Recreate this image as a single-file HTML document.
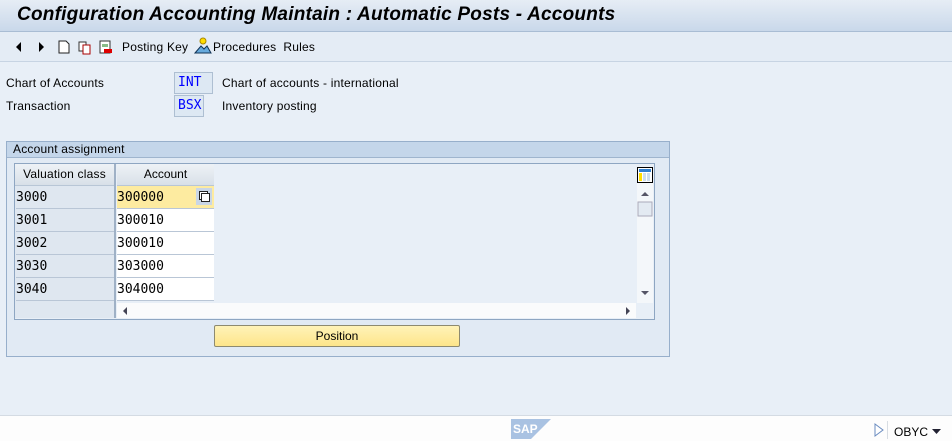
<!DOCTYPE html>
<html><head><style>
body{margin:0;width:952px;height:440px;background:#e8eff7;font-family:"Liberation Sans",sans-serif;font-size:12px;color:#000;position:relative;overflow:hidden}
.a{position:absolute}
.mono{font-family:"DejaVu Sans Mono","Liberation Mono",monospace;font-size:13px}
</style></head><body>
<div class="a" style="left:0;top:0;width:952px;height:31px;background:linear-gradient(#e6edf5,#c9d8ea);border-bottom:1px solid #a9bdd4"></div>
<div class="a" style="left:17px;top:4px;font-size:19px;font-weight:bold;font-style:italic;color:#000;letter-spacing:0.22px">Configuration Accounting Maintain : Automatic Posts - Accounts</div>
<div class="a" style="left:0;top:32px;width:952px;height:29px;background:#e4ecf5;border-bottom:1px solid #c7d4e3"></div>
<svg class="a" style="left:12px;top:39px" width="110" height="16">
<path d="M4 8 L9 3 V13Z" fill="#000"/><path d="M27 3 L32 8 L27 13Z" fill="#000"/>
<path d="M47 2 H54 L57 5 V14 H47Z" fill="#fff" stroke="#222"/>
<rect x="67" y="3" width="7" height="9" fill="#fff" stroke="#333"/><rect x="71" y="6" width="7" height="9" fill="#fff" stroke="#a00"/>
<rect x="88" y="2" width="10" height="12" fill="#fff" stroke="#333"/><rect x="90" y="5" width="6" height="3" fill="#8b8"/><rect x="92" y="10" width="8" height="4" fill="#d00"/>
</svg>
<div class="a" style="left:122px;top:40px;font-size:12px;letter-spacing:0.2px">Posting Key</div>
<svg class="a" style="left:194px;top:37px" width="18" height="18"><circle cx="9" cy="4" r="3" fill="#fd0" stroke="#a80"/><path d="M1 16 L7 9 L10 12 L13 9 L17 16Z" fill="#6ad" stroke="#135"/></svg>
<div class="a" style="left:213px;top:40px;letter-spacing:0.2px">Procedures&nbsp; Rules</div>

<div class="a" style="left:6px;top:76px;letter-spacing:0.2px">Chart of Accounts</div>
<div class="a" style="left:6px;top:99px;letter-spacing:0.2px">Transaction</div>
<div class="a mono" style="left:174px;top:72px;background:#dde8f3;border:1px solid #aebfd2;color:#00f;line-height:20px;padding-left:3px;box-sizing:border-box;width:39px;height:22px">INT</div>
<div class="a mono" style="left:174px;top:95px;background:#dde8f3;border:1px solid #aebfd2;color:#00f;line-height:20px;padding-left:3px;box-sizing:border-box;width:30px;height:22px">BSX</div>
<div class="a" style="left:222px;top:76px;letter-spacing:0.2px">Chart of accounts - international</div>
<div class="a" style="left:222px;top:99px;letter-spacing:0.2px">Inventory posting</div>

<div class="a" style="left:6px;top:141px;width:662px;height:214px;border:1px solid #97afcb;background:#e1eaf4"></div>
<div class="a" style="left:7px;top:142px;width:662px;height:15px;background:#c4d6ea;border-bottom:1px solid #9fb5ce"></div>
<div class="a" style="left:13px;top:142px;letter-spacing:0.2px">Account assignment</div>

<div class="a" style="left:14px;top:163px;width:639px;height:155px;border:1px solid #8ea6c2;background:#e8eff7"></div>
<div class="a" style="left:15px;top:164px;width:99px;height:154px;background:#dfe7f0;border-right:2px solid #9fb1c6"></div>
<div class="a" style="left:15px;top:164px;width:99px;height:21px;background:linear-gradient(#eef2f6,#d8e0e8);border-bottom:1px solid #b8c6d6;text-align:center;line-height:21px;letter-spacing:0.2px">Valuation class</div>
<div class="a" style="left:117px;top:164px;width:97px;height:21px;background:linear-gradient(#eef2f6,#d8e0e8);border-bottom:1px solid #b8c6d6;text-align:center;line-height:21px">Account</div>
<div class="a mono" style="left:16px;top:186px;width:98px;line-height:23px">
<div style="border-bottom:1px solid #b9c6d6;height:22px">3000</div>
<div style="border-bottom:1px solid #b9c6d6;height:22px">3001</div>
<div style="border-bottom:1px solid #b9c6d6;height:22px">3002</div>
<div style="border-bottom:1px solid #b9c6d6;height:22px">3030</div>
<div style="border-bottom:1px solid #b9c6d6;height:22px">3040</div>
</div>
<div class="a mono" style="left:117px;top:186px;width:97px;line-height:23px;background:#fff">
<div style="border-bottom:1px solid #b9c6d6;height:22px;background:#fdeba0;position:relative">300000<span style="position:absolute;right:2px;top:2px;width:16px;height:17px;background:#c9d6e6;"></span><span style="position:absolute;right:6px;top:5px;width:7px;height:7px;border:1px solid #222;background:#fff"></span><span style="position:absolute;right:4px;top:7px;width:7px;height:7px;border:1px solid #222;background:#fff"></span></div>
<div style="border-bottom:1px solid #b9c6d6;height:22px">300010</div>
<div style="border-bottom:1px solid #b9c6d6;height:22px">300010</div>
<div style="border-bottom:1px solid #b9c6d6;height:22px">303000</div>
<div style="border-bottom:1px solid #b9c6d6;height:22px">304000</div>
</div>
<div class="a" style="left:117px;top:303px;width:519px;height:15px;background:#fafbfc"></div>
<svg class="a" style="left:120px;top:305px" width="520" height="12"><path d="M7 2 L3 6 L7 10Z" fill="#445"/><path d="M506 2 L510 6 L506 10Z" fill="#445"/></svg>
<div class="a" style="left:637px;top:167px;width:16px;height:136px;background:#f4f7fa"></div>
<svg class="a" style="left:637px;top:167px" width="16" height="136">
<rect x="0.5" y="0.5" width="15" height="15" fill="#fff" stroke="#000"/><rect x="2" y="2" width="12" height="3" fill="#2f7fd0"/><rect x="2" y="6" width="3" height="8" fill="#fd0"/><rect x="6" y="6" width="3" height="8" fill="#cde"/><rect x="10" y="6" width="3" height="8" fill="#cde"/>
<path d="M4 29 L8 25 L12 29Z" fill="#556"/><rect x="1" y="35" width="14" height="14" fill="#e3eaf2" stroke="#aab"/>
<path d="M4 124 L8 128 L12 124Z" fill="#556"/></svg>

<div class="a" style="left:214px;top:325px;width:244px;height:20px;background:linear-gradient(#fff3b8,#fde58a);border:1px solid #8d8a70;border-radius:2px;text-align:center;line-height:20px">Position</div>

<div class="a" style="left:0;top:415px;width:952px;height:25px;background:#fdfdfd;border-top:1px solid #d4dbe3"></div>
<svg class="a" style="left:511px;top:419px" width="40" height="20"><path d="M0 0 H40 L20 20 H0Z" fill="#a9c2e2"/><text x="2" y="14" font-family="Liberation Sans" font-weight="bold" font-size="12" fill="#fff">SAP</text></svg>
<svg class="a" style="left:873px;top:423px" width="12" height="14"><path d="M2 1 L10 7 L2 13Z" fill="#fff" stroke="#6a8cc0"/></svg>
<div class="a" style="left:887px;top:421px;width:1px;height:18px;background:#d8dde3"></div>
<div class="a" style="left:894px;top:425px;font-size:12px">OBYC</div>
<svg class="a" style="left:932px;top:429px" width="10" height="6"><path d="M0 0 H9 L4.5 5Z" fill="#223"/></svg>
</body></html>
